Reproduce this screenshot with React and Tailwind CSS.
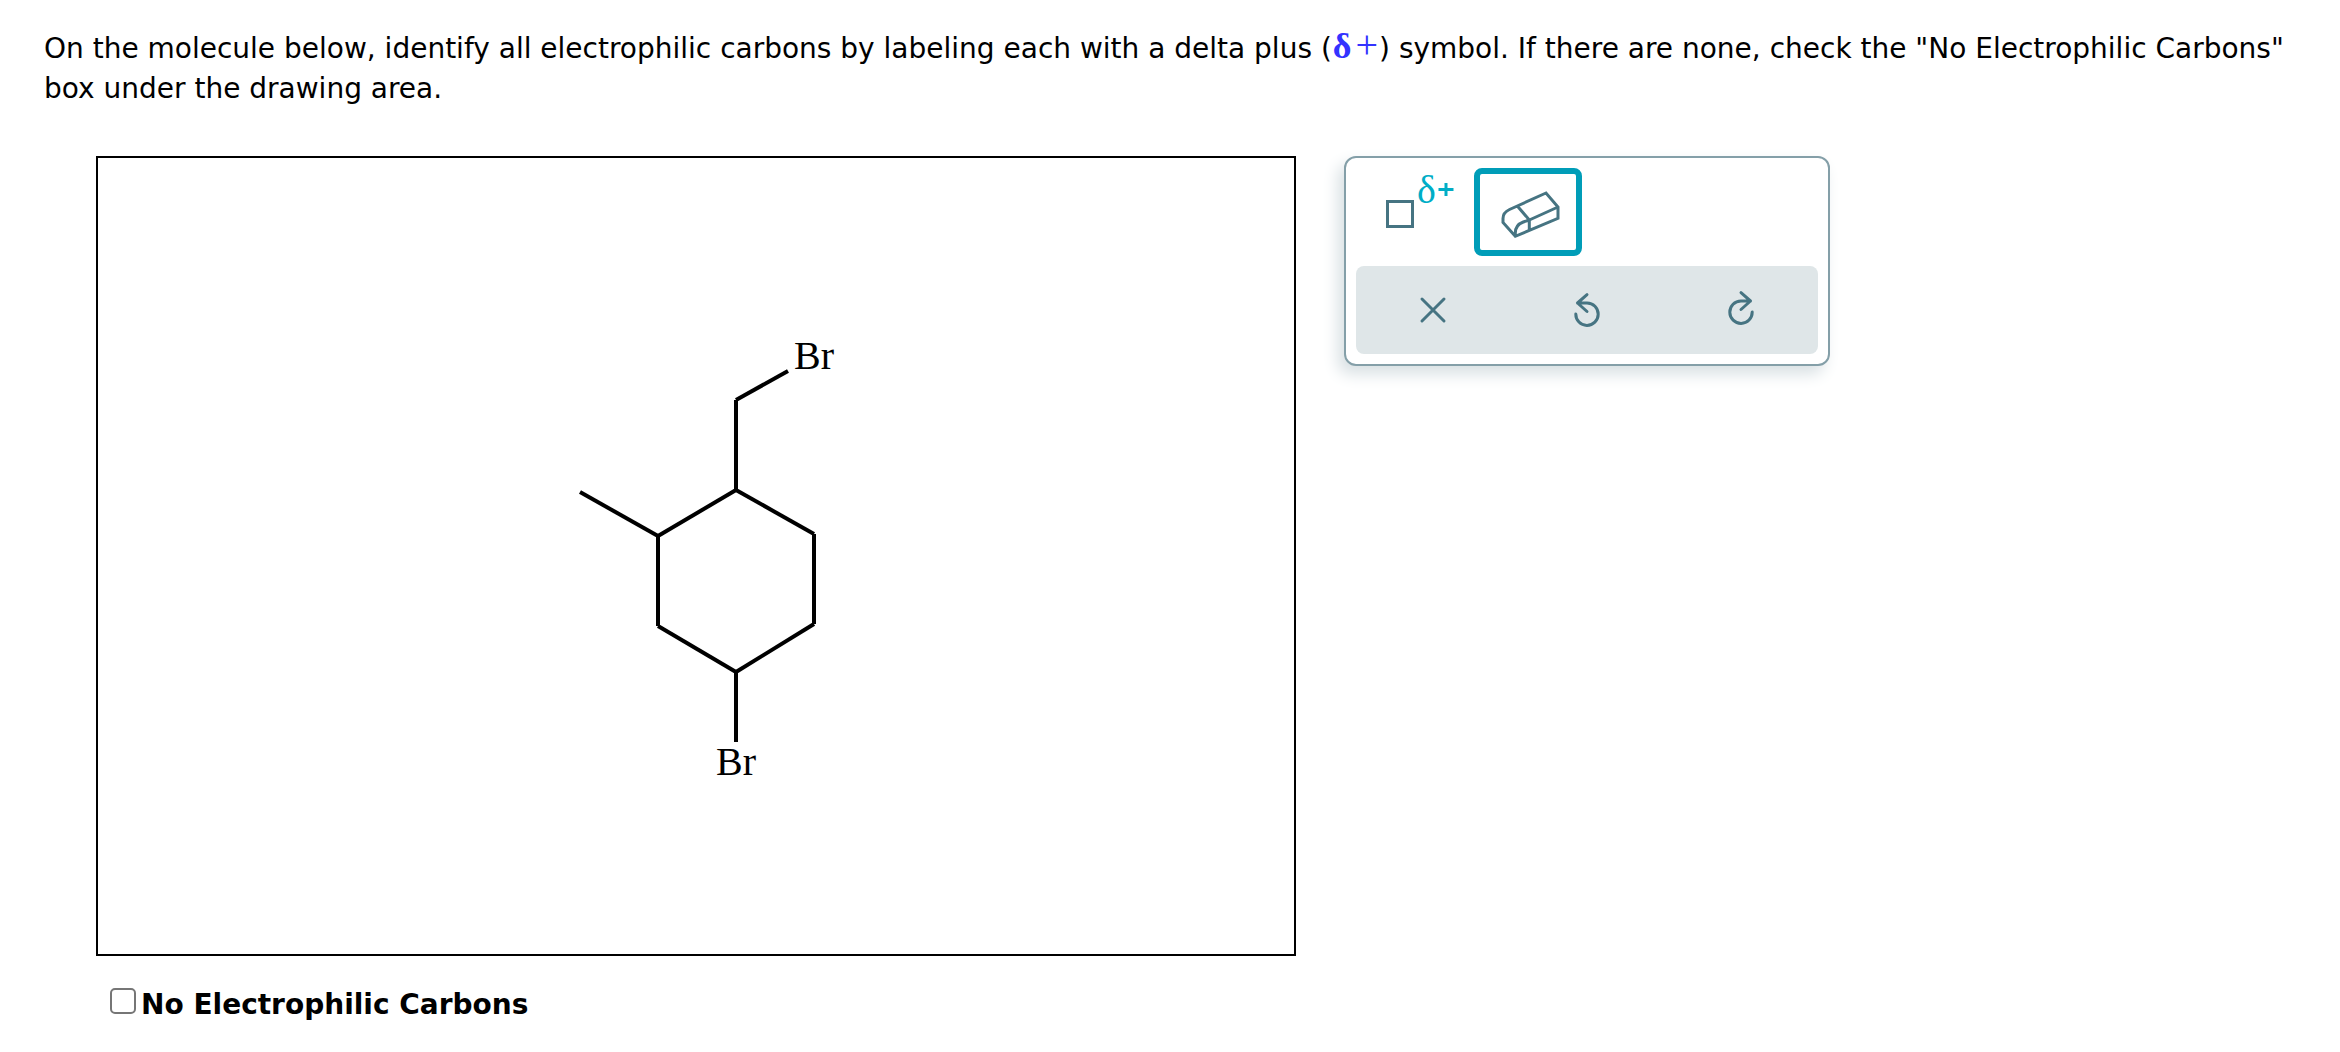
import React, { useState } from 'react';

const bonds = [
  [690, 213, 638, 242],
  [638, 242, 638, 332],
  [638, 332, 716, 376],
  [716, 376, 716, 466],
  [716, 466, 638, 514],
  [638, 514, 560, 468],
  [560, 468, 560, 378],
  [560, 378, 638, 332],
  [560, 378, 482, 334],
  [638, 514, 638, 584],
];

const atoms = [
  { label: 'Br', x: 696, y: 211 },
  { label: 'Br', x: 618, y: 617 },
];

export default function App() {
  const [tool, setTool] = useState('eraser');
  const [none, setNone] = useState(false);

  return (
    <main className="bg-white px-11 pt-[29px] pb-6 text-[28px] leading-10 text-black font-['DejaVu_Sans',Verdana,sans-serif]">
      <p>
        On the molecule below, identify all electrophilic carbons by labeling each with a delta plus (
        <span className="mx-px text-[36px] leading-7 text-[#3333ff] font-['Liberation_Serif',serif]">
          <b>δ</b><span className="ml-1 text-[40px]">+</span>
        </span>
        ) symbol. If there are none, check the "No Electrophilic Carbons" box under the drawing area.
      </p>

      <div className="mt-[47px] ml-13 flex items-start gap-12">
        <div className="w-full max-w-[1200px] border-2 border-black">
          <Molecule />
        </div>
        <Toolbox tool={tool} onSelect={setTool} />
      </div>

      <div className="mt-[29px] ml-[66px] flex items-start gap-[5px]">
        <input
          id="no-carbons"
          type="checkbox"
          checked={none}
          onChange={(e) => setNone(e.target.checked)}
          className="mt-[3px] size-[26px] shrink-0 appearance-none rounded-[5px] border-2 border-[#767676] bg-white checked:bg-[#3333ff]"
        />
        <label htmlFor="no-carbons" className="font-bold">No Electrophilic Carbons</label>
      </div>
    </main>
  );
}

function Molecule() {
  return (
    <svg viewBox="0 0 1196 796" className="block h-auto w-full" role="img" aria-label="Molecule">
      <g stroke="#000" strokeWidth="4">
        {bonds.map(([x1, y1, x2, y2], i) => (
          <line key={i} x1={x1} y1={y1} x2={x2} y2={y2} />
        ))}
      </g>
      {atoms.map((a) => (
        <text key={a.y} x={a.x} y={a.y} fontSize="40" fontFamily="Liberation Serif, serif">{a.label}</text>
      ))}
    </svg>
  );
}

function Toolbox({ tool, onSelect }) {
  return (
    <div className="w-full max-w-[486px] rounded-xl border-2 border-[#849fa8] bg-white p-[10px] shadow-[-6px_8px_16px_#d8e0e3]">
      <div className="flex gap-[10px]">
        <ToolButton label="Delta plus" active={tool === 'delta'} onClick={() => onSelect('delta')}>
          <rect x="25.5" y="27.5" width="25" height="25" strokeWidth="3" />
          <text x="55" y="29" fontSize="40" fontFamily="Liberation Serif, serif" fill="#00adc6" stroke="none">δ</text>
          <path d="M76.5 15.5h15M84 9v13" stroke="#00adc6" strokeWidth="3" />
        </ToolButton>
        <ToolButton label="Eraser" active={tool === 'eraser'} onClick={() => onSelect('eraser')}>
          <path d="M66 19 29.5 35.5Q23 38.5 23 44.5V48.5L35.3 62.3 78 44.3V33ZM37.3 32 49.3 46 78 33M49.3 46V56M35.3 62.3V59Q35.3 51 43.3 48L49.3 46" />
        </ToolButton>
      </div>
      <div className="mt-[10px] grid h-[88px] grid-cols-3 rounded-lg bg-[#dfe6e8]">
        <ActionButton label="Clear">
          <path d="M5 9 27 31M27 9 5 31" />
        </ActionButton>
        <ActionButton label="Undo">
          <path d="M16 4.7 6.5 13 16 21.5M6.5 13H16A11.2 11.2 0 1 1 4.8 24" />
        </ActionButton>
        <ActionButton label="Redo">
          <path d="M16 2.7 25.5 11 16 19.5M25.5 11H16A11.2 11.2 0 1 0 27.2 22" />
        </ActionButton>
      </div>
    </div>
  );
}

function ToolButton({ label, active, onClick, children }) {
  return (
    <button
      type="button"
      aria-label={label}
      aria-pressed={active}
      onClick={onClick}
      className={`h-[88px] w-[108px] rounded-lg border-6 ${active ? 'border-[#009db8]' : 'border-transparent'}`}
    >
      <svg viewBox="0 0 96 76" className="block h-full w-full overflow-visible" fill="none" stroke="#467482" strokeWidth="3">
        {children}
      </svg>
    </button>
  );
}

function ActionButton({ label, children }) {
  return (
    <button type="button" aria-label={label} className="flex items-center justify-center">
      <svg viewBox="0 0 32 40" className="h-10 w-8" fill="none" stroke="#467482" strokeWidth="3" strokeLinecap="round" strokeLinejoin="round">
        {children}
      </svg>
    </button>
  );
}
